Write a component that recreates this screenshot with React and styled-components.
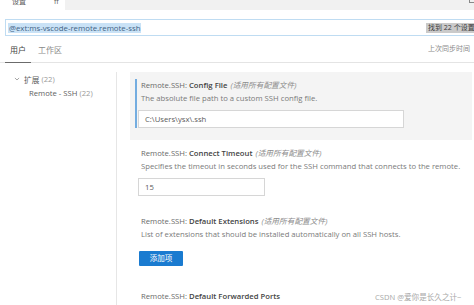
import React from "react";
import styled, { createGlobalStyle } from "styled-components";

const Global = createGlobalStyle`
  html, body { margin: 0; padding: 0; background: #ffffff; }
  body { font-family: "Open Sans", "Noto Sans CJK SC", sans-serif; }
  * { box-sizing: border-box; }
`;

const Page = styled.div`
  position: relative;
  width: 474px;
  height: 305px;
  overflow: hidden;
  background: #ffffff;
  color: #616161;
  font-family: "Open Sans", "Noto Sans CJK SC", sans-serif;
`;

const TopBar = styled.div`
  display: flex;
  height: 10px;
  overflow: hidden;
`;

const EditorTab = styled.div`
  width: 65px;
  flex: none;
  display: flex;
  align-items: flex-end;
  gap: 28px;
  padding-left: 12px;
  font-size: 7px;
  line-height: 7px;
  color: #555;
  background: #ffffff;
  margin-top: -7px;
  height: 12px;
`;

const TabFill = styled.div`
  flex: 1;
  background: #f1f1f1;
  position: relative;
`;

const CornerIcon = styled.div`
  position: absolute;
  right: -3px;
  top: -4px;
  width: 8px;
  height: 7px;
  border: 1px solid #888;
`;

const SearchRow = styled.div`
  padding: 9px 0 0 5px;
`;

const SearchBox = styled.div`
  display: flex;
  align-items: center;
  height: 17px;
  border: 1px solid #bfdcf2;
  border-right: none;
  padding-left: 2px;
  background: #fff;
`;

const Query = styled.span`
  background: #c9e2f6;
  color: #3f6385;
  font-size: 7.8px;
  line-height: 10px;
  padding: 0 1px;
  white-space: nowrap;
`;

const CountBadge = styled.span`
  margin-left: auto;
  background: #cacaca;
  color: #3a3a3a;
  font-size: 7px;
  line-height: 10px;
  padding: 0 2px 0 2px;
  white-space: nowrap;
  width: 48px;
  overflow: hidden;
`;

const TabsRow = styled.div`
  display: flex;
  align-items: flex-end;
  height: 27px;
  border-bottom: 1px solid #e4e4e4;
  padding-left: 5px;
`;

const ScopeTab = styled.div`
  font-size: 8px;
  line-height: 10px;
  padding: 0 5px 7px 5px;
  margin-right: 2px;
  color: ${(p) => (p.$active ? "#424242" : "#8a8a8a")};
  border-bottom: 1px solid ${(p) => (p.$active ? "#6b6b6b" : "transparent")};
  margin-bottom: -1px;
`;

const SyncInfo = styled.div`
  margin-left: auto;
  font-size: 7px;
  line-height: 10px;
  color: #8a8a8a;
  padding-bottom: 8px;
  width: 46px;
  white-space: nowrap;
  overflow: hidden;
`;

const Body = styled.div`
  display: flex;
  padding-top: 9px;
`;

const Tree = styled.div`
  width: 116px;
  flex: none;
  font-size: 7.7px;
`;

const TreeRow = styled.div`
  display: flex;
  align-items: center;
  height: 14px;
  padding-left: ${(p) => p.$indent}px;
  color: #616161;
  white-space: nowrap;
`;

const Chevron = styled.svg`
  width: 6px;
  height: 6px;
  margin-right: 4px;
`;

const Count = styled.span`
  color: #9a9a9a;
  margin-left: 2px;
`;

const Settings = styled.div`
  flex: 1;
  border-left: 1px solid #e6e6e6;
  padding-left: 13px;
  padding-right: 2px;
  min-height: 240px;
`;

const SettingItem = styled.div`
  background: ${(p) => (p.$focused ? "#f4f4f4" : "transparent")};
  padding: 7px 0 ${(p) => p.$pb || 12}px 5px;
`;

const ItemContent = styled.div`
  border-left: 2px solid ${(p) => (p.$focused ? "#74ade0" : "transparent")};
  padding-left: 1px;
`;

const Title = styled.div`
  font-size: 7.7px;
  line-height: 13px;
  color: #6a6a6a;
  padding-left: 3px;
  white-space: nowrap;
`;

const Strong = styled.span`
  color: #444;
  font-weight: 600;
`;

const Scope = styled.span`
  font-style: italic;
  color: #8c8c8c;
  margin-left: 3px;
`;

const Desc = styled.div`
  font-size: 7.7px;
  line-height: 13px;
  color: #7a7a7a;
  padding-left: 3px;
  white-space: nowrap;
`;

const TextInput = styled.div`
  margin-top: 5px;
  width: ${(p) => p.$w}px;
  height: 18px;
  border: 1px solid #d6d6d6;
  background: #fff;
  font-size: 7.7px;
  line-height: 16px;
  padding-left: 6px;
  color: #5a5a5a;
`;

const AddButton = styled.div`
  margin: 10px 0 11px 1px;
  width: 44px;
  height: 15px;
  background: #1a7bd0;
  color: #ffffff;
  font-size: 7.5px;
  line-height: 15px;
  text-align: center;
  border-radius: 1px;
`;

const Watermark = styled.div`
  position: absolute;
  left: 375px;
  top: 292px;
  font-size: 7.6px;
  line-height: 10px;
  color: #a8a8a8;
  white-space: nowrap;
`;

const items = [
  {
    name: "Config File",
    desc: "The absolute file path to a custom SSH config file.",
    input: { w: 266, value: "C:\\Users\\ysx\\.ssh" },
    focused: true,
  },
  {
    name: "Connect Timeout",
    desc: "Specifies the timeout in seconds used for the SSH command that connects to the remote.",
    input: { w: 127, value: "15" },
  },
  {
    name: "Default Extensions",
    desc: "List of extensions that should be installed automatically on all SSH hosts.",
    button: "添加项",
  },
  {
    name: "Default Forwarded Ports",
    scopeless: true,
  },
];

export default function App() {
  return (
    <Page>
      <Global />
      <TopBar>
        <EditorTab>
          <span>设置</span>
          <span>ff</span>
        </EditorTab>
        <TabFill>
          <CornerIcon />
        </TabFill>
      </TopBar>
      <SearchRow>
        <SearchBox>
          <Query>@ext:ms-vscode-remote.remote-ssh</Query>
          <CountBadge>找到 22 个设置</CountBadge>
        </SearchBox>
      </SearchRow>
      <TabsRow>
        <ScopeTab $active>用户</ScopeTab>
        <ScopeTab>工作区</ScopeTab>
        <SyncInfo>上次同步时间</SyncInfo>
      </TabsRow>
      <Body>
        <Tree>
          <TreeRow $indent={14}>
            <Chevron viewBox="0 0 10 10">
              <path d="M1.5 3.2 L5 6.7 L8.5 3.2" fill="none" stroke="#777" strokeWidth="1.1" />
            </Chevron>
            扩展<Count>(22)</Count>
          </TreeRow>
          <TreeRow $indent={29}>
            Remote - SSH<Count>(22)</Count>
          </TreeRow>
        </Tree>
        <Settings>
          {items.map((it) => (
            <SettingItem key={it.name} $focused={it.focused} $pb={it.button ? 6 : 12}>
              <ItemContent $focused={it.focused}>
                <Title>
                  Remote.SSH: <Strong>{it.name}</Strong>
                  {!it.scopeless && <Scope>(适用所有配置文件)</Scope>}
                </Title>
                {it.desc && <Desc>{it.desc}</Desc>}
                {it.input && <TextInput $w={it.input.w}>{it.input.value}</TextInput>}
                {it.button && <AddButton>{it.button}</AddButton>}
              </ItemContent>
            </SettingItem>
          ))}
        </Settings>
      </Body>
      <Watermark>CSDN @爱你是长久之计~</Watermark>
    </Page>
  );
}
